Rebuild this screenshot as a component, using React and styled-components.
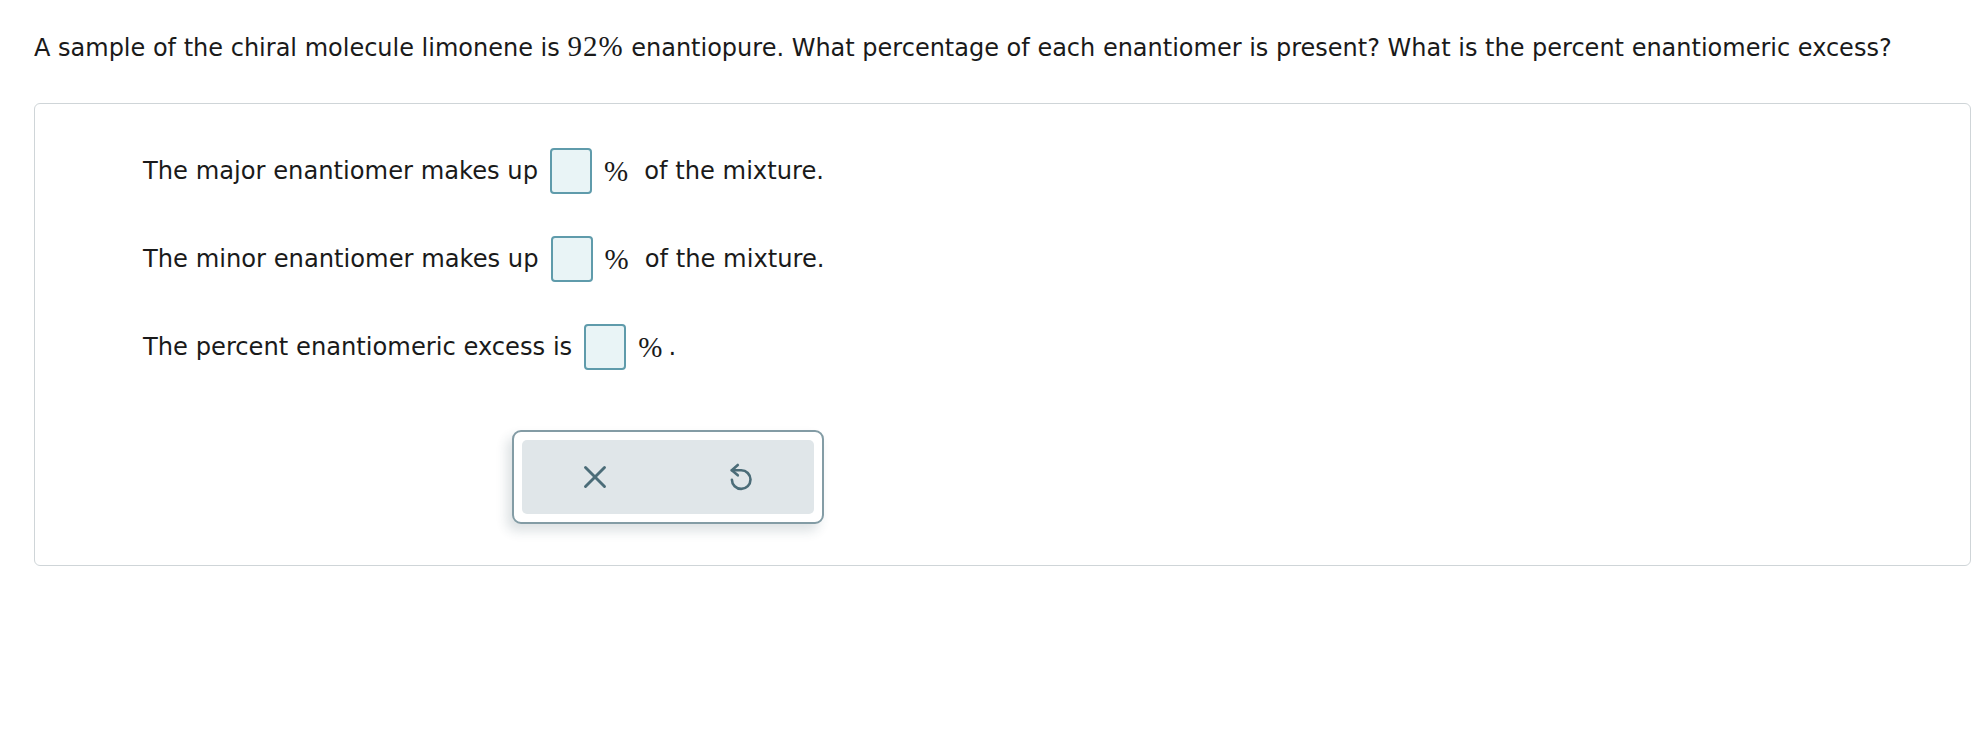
import React from 'react';
import styled, { createGlobalStyle } from 'styled-components';

const GlobalStyle = createGlobalStyle`
  html, body {
    margin: 0;
    padding: 0;
    background: #ffffff;
  }
  body {
    font-family: "DejaVu Sans", Verdana, sans-serif;
    color: #1a1a1a;
  }
`;

// Styled Components
const Page = styled.div`
  padding: 0 1px 0 34px;
`;

const Question = styled.p`
  margin: 0;
  padding-top: 31px;
  font-size: 24px;
  line-height: 30px;
  white-space: nowrap;
`;

const Math = styled.span`
  font-family: "Liberation Serif", "Times New Roman", serif;
  font-size: ${props => props.size || 29}px;
  letter-spacing: ${props => props.spacing || 0}px;
`;

const Card = styled.div`
  margin-top: 40px;
  border: 1px solid #cfd5d8;
  border-radius: 6px;
  padding: 23px 0 0 108px;
  box-sizing: border-box;
  height: 463px;
`;

const Row = styled.div`
  display: flex;
  align-items: center;
  height: 88px;
  font-size: 24.2px;
  white-space: nowrap;
`;

const AnswerBox = styled.div`
  width: 42px;
  height: 46px;
  box-sizing: border-box;
  border: 2px solid #5f9bab;
  border-radius: 4px;
  background: #e9f4f6;
  margin: 0 12px 0 12px;
`;

const Trailing = styled.span`
  margin-left: ${props => props.gap || 16}px;
`;

const ActionPanel = styled.div`
  margin: 39px 0 0 369px;
  width: 312px;
  height: 94px;
  box-sizing: border-box;
  border: 2px solid #839ca5;
  border-radius: 9px;
  background: #ffffff;
  padding: 8px;
  box-shadow: -5px 7px 12px rgba(40, 70, 80, 0.16);
`;

const ActionTray = styled.div`
  display: flex;
  height: 100%;
  background: #e0e6e9;
  border-radius: 5px;
`;

const ActionButton = styled.button`
  flex: 1;
  display: flex;
  align-items: center;
  justify-content: center;
  background: transparent;
  border: none;
  padding: 0;
  cursor: pointer;
  color: #4b6c78;
`;
// End of Styled Components

const CloseIcon = () => (
  <svg width="24" height="24" viewBox="0 0 24 24" fill="none" stroke="currentColor" strokeWidth="2.9" strokeLinecap="round">
    <line x1="2.5" y1="2.5" x2="21.5" y2="21.5" />
    <line x1="21.5" y1="2.5" x2="2.5" y2="21.5" />
  </svg>
);

const UndoIcon = () => (
  <svg width="28" height="28" viewBox="0 0 28 28" fill="none" stroke="currentColor" strokeWidth="2.6" strokeLinecap="round" strokeLinejoin="round">
    <path d="M4.8 7.3 H14.2 A9.3 9.3 0 1 1 4.9 16.7" />
    <path d="M10.8 2 L4.8 7.3 L10.8 12.3" />
  </svg>
);

const rows = [
  { label: 'The major enantiomer makes up', tail: 'of the mixture.' },
  { label: 'The minor enantiomer makes up', tail: 'of the mixture.' },
  { label: 'The percent enantiomeric excess is', tail: '.' },
];

export default function App() {
  return (
    <Page>
      <GlobalStyle />
      <Question>
        A sample of the chiral molecule limonene is <Math spacing={1}>92%</Math> enantiopure. What
        percentage of each enantiomer is present? What is the percent enantiomeric excess?
      </Question>
      <Card>
        {rows.map(row => (
          <Row key={row.label}>
            {row.label}
            <AnswerBox />
            <Math>%</Math>
            <Trailing gap={row.tail === '.' ? 6 : 16}>{row.tail}</Trailing>
          </Row>
        ))}
        <ActionPanel>
          <ActionTray>
            <ActionButton aria-label="Clear">
              <CloseIcon />
            </ActionButton>
            <ActionButton aria-label="Undo">
              <UndoIcon />
            </ActionButton>
          </ActionTray>
        </ActionPanel>
      </Card>
    </Page>
  );
}
